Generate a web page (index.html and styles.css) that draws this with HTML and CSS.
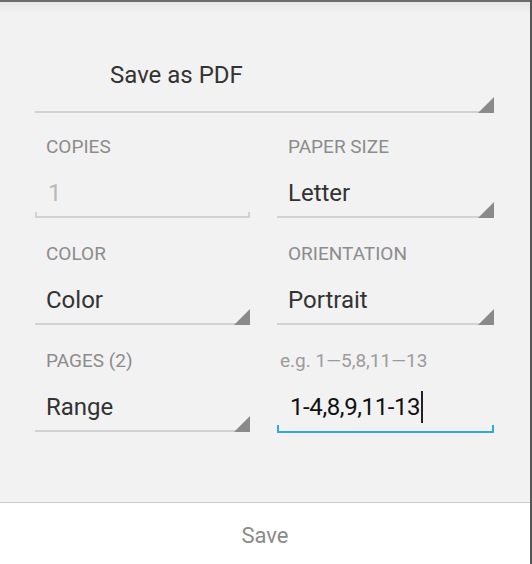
FILE: index.html
```html
<!DOCTYPE html>
<html lang="en">
<head>
  <meta charset="UTF-8" />
  <meta name="viewport" content="width=device-width, initial-scale=1.0"/>
  <title>Print options</title>
  <link rel="stylesheet" href="styles.css">
</head>
<body>
  <div class="dialog">
    <section class="options">
      <div class="spinner destination"><span class="value">Save as PDF</span></div>

      <div class="grid">
        <div class="field">
          <div class="label">Copies</div>
          <div class="edit"><span class="value muted">1</span></div>
        </div>
        <div class="field">
          <div class="label">Paper size</div>
          <div class="spinner"><span class="value">Letter</span></div>
        </div>

        <div class="field">
          <div class="label">Color</div>
          <div class="spinner"><span class="value">Color</span></div>
        </div>
        <div class="field">
          <div class="label">Orientation</div>
          <div class="spinner"><span class="value">Portrait</span></div>
        </div>

        <div class="field">
          <div class="label">Pages (2)</div>
          <div class="spinner"><span class="value">Range</span></div>
        </div>
        <div class="field">
          <div class="hint">e.g. 1—5,8,11—13</div>
          <div class="edit focused"><span class="value typed">1-4,8,9,11-13</span><span class="cursor"></span></div>
        </div>
      </div>
    </section>

    <footer class="actions">
      <span class="save">Save</span>
    </footer>
  </div>
</body>
</html>
```

FILE: styles.css
```css
body {
  margin: 0;
  padding: 0;
  font-family: Roboto, "Liberation Sans", sans-serif;
  background: #fff;
}
.dialog {
  width: 532px;
  height: 564px;
  box-sizing: border-box;
  border-right: 2px solid #555;
  display: flex;
  flex-direction: column;
}
.options {
  height: 503px;
  box-sizing: border-box;
  border-top: 2px solid #6a6a6a;
  border-bottom: 1px solid #cdcdcd;
  background: linear-gradient(#e6e6e6, #f2f2f2 12px);
  padding: 59px 36px 0 35px;
}
.value {
  font-size: 24px;
  line-height: 28px;
  color: #333;
  white-space: nowrap;
}
.spinner {
  position: relative;
  height: 28px;
  padding: 0 0 9px 11px;
  border-bottom: 2px solid #d2d2d2;
}
.spinner::after {
  content: "";
  position: absolute;
  right: 0;
  bottom: -2px;
  border-left: 16px solid transparent;
  border-bottom: 16px solid #8a8a8a;
}
.destination {
  padding: 0 0 22px 75px;
}
.grid {
  margin-top: 23px;
  display: grid;
  grid-template-columns: 215px 217px;
  column-gap: 27px;
  row-gap: 25px;
}
.label {
  font-size: 19px;
  line-height: 22px;
  color: #8c8c8c;
  text-transform: uppercase;
  padding-left: 11px;
  margin-bottom: 21px;
}
.hint {
  font-size: 19px;
  line-height: 22px;
  color: #9c9c9c;
  padding-left: 3px;
  margin-bottom: 21px;
}
.edit {
  position: relative;
  height: 28px;
  padding: 0 0 9px 11px;
  border: 2px solid #d2d2d2;
  border-top: none;
  border-image: linear-gradient(transparent 0 calc(100% - 5px), #d2d2d2 calc(100% - 5px)) 1;
  display: flex;
  align-items: center;
}
.edit.focused {
  padding-bottom: 10px;
  border-color: #2ea9db;
  border-image: linear-gradient(transparent 0 calc(100% - 7px), #2ea9db calc(100% - 7px)) 1;
}
.muted {
  color: #b9b9b9;
}
.typed {
  color: #111;
  letter-spacing: -0.4px;
}
.cursor {
  display: inline-block;
  width: 2px;
  height: 32px;
  margin-left: 1px;
  background: #222;
}
.actions {
  flex: 1;
  background: #fff;
  display: flex;
  justify-content: center;
  padding-top: 20px;
}
.save {
  font-size: 22px;
  line-height: 26px;
  color: #8a8a8a;
}
```
